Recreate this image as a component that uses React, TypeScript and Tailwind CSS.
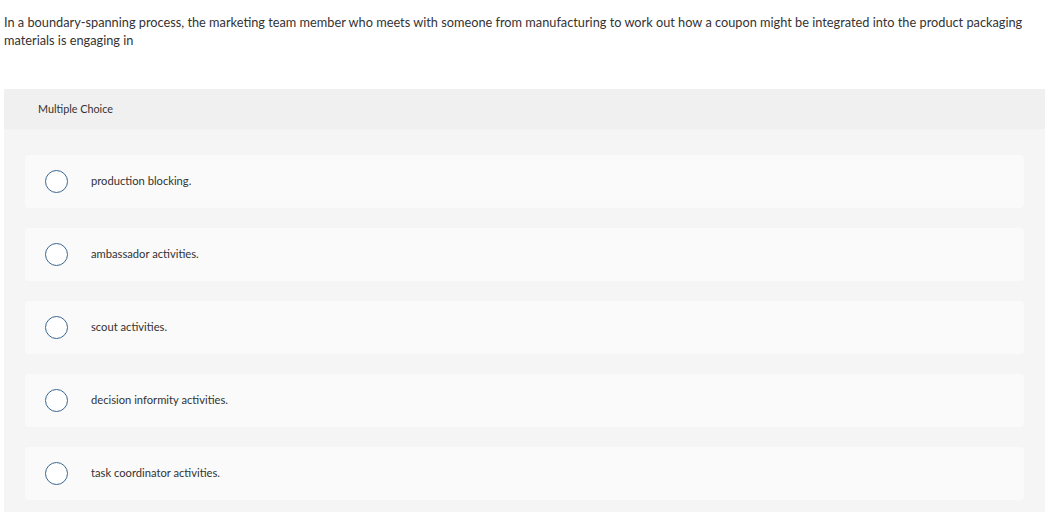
const options = [
  "production blocking.",
  "ambassador activities.",
  "scout activities.",
  "decision informity activities.",
  "task coordinator activities.",
];

export default function App() {
  return (
    <div className="min-h-[512px] bg-white pl-1 pt-[13px] font-['Lato',_'Open_Sans',_sans-serif] text-[#333]">
      <p className="pr-4 text-[12.75px] leading-[18px]">
        In a boundary-spanning process, the marketing team member who meets with someone from manufacturing to work
        out how a coupon might be integrated into the product packaging materials is engaging in
      </p>

      <div className="mt-[40px]">
        {/* Header */}
        <div className="flex h-10 items-center bg-[#f0f0f0] pl-[34px] text-[10.8px]">Multiple Choice</div>

        {/* Choices */}
        <div className="flex flex-col gap-5 bg-[#f5f5f5] pb-5 pl-[21px] pr-[21px] pt-[26px]">
          {options.map((opt) => (
            <div key={opt} className="flex h-[53px] items-center rounded-sm bg-[#fafafa]">
              <span className="ml-[20px] h-[23px] w-[23px] shrink-0 rounded-full border-[1.5px] border-[#3a6690] bg-white" />
              <span className="ml-[23px] text-[11.2px]">{opt}</span>
            </div>
          ))}
        </div>
      </div>
    </div>
  );
}
